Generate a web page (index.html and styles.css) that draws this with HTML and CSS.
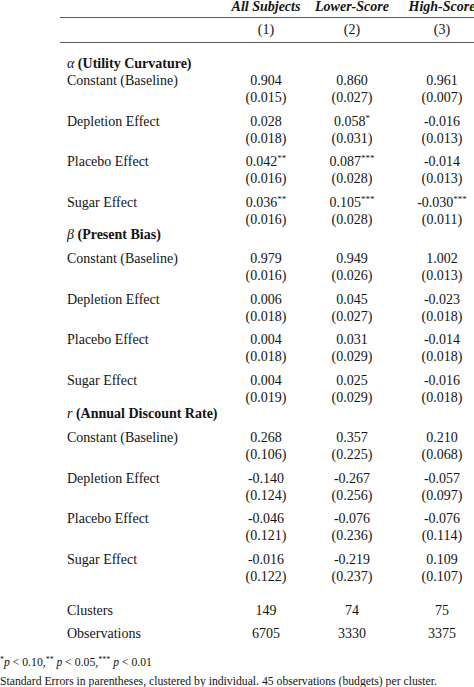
FILE: index.html
```html
<!DOCTYPE html>
<html>
<head>
<meta charset="utf-8">
<link rel="stylesheet" href="styles.css">
</head>
<body>
<div class="page">
  <div class="tbl">
    <div class="row head"><span></span><span class="c">All Subjects</span><span class="c">Lower-Score</span><span class="c">High-Score</span></div>
    <div class="rule"></div>
    <div class="row nums"><span></span><span class="c">(1)</span><span class="c">(2)</span><span class="c">(3)</span></div>
    <div class="rule"></div>

    <div class="sect first"><i class="m">α</i> <b>(Utility Curvature)</b></div>
    <div class="row data"><span class="lbl">Constant (Baseline)</span><span class="c">0.904<br>(0.015)</span><span class="c">0.860<br>(0.027)</span><span class="c">0.961<br>(0.007)</span></div>
    <div class="row data"><span class="lbl">Depletion Effect</span><span class="c">0.028<br>(0.018)</span><span class="c">0.058<sup>*</sup><br>(0.031)</span><span class="c">-0.016<br>(0.013)</span></div>
    <div class="row data"><span class="lbl">Placebo Effect</span><span class="c">0.042<sup>**</sup><br>(0.016)</span><span class="c">0.087<sup>***</sup><br>(0.028)</span><span class="c">-0.014<br>(0.013)</span></div>
    <div class="row data"><span class="lbl">Sugar Effect</span><span class="c">0.036<sup>**</sup><br>(0.016)</span><span class="c">0.105<sup>***</sup><br>(0.028)</span><span class="c">-0.030<sup>***</sup><br>(0.011)</span></div>

    <div class="sect"><i class="m">β</i> <b>(Present Bias)</b></div>
    <div class="row data"><span class="lbl">Constant (Baseline)</span><span class="c">0.979<br>(0.016)</span><span class="c">0.949<br>(0.026)</span><span class="c">1.002<br>(0.013)</span></div>
    <div class="row data"><span class="lbl">Depletion Effect</span><span class="c">0.006<br>(0.018)</span><span class="c">0.045<br>(0.027)</span><span class="c">-0.023<br>(0.018)</span></div>
    <div class="row data"><span class="lbl">Placebo Effect</span><span class="c">0.004<br>(0.018)</span><span class="c">0.031<br>(0.029)</span><span class="c">-0.014<br>(0.018)</span></div>
    <div class="row data"><span class="lbl">Sugar Effect</span><span class="c">0.004<br>(0.019)</span><span class="c">0.025<br>(0.029)</span><span class="c">-0.016<br>(0.018)</span></div>

    <div class="sect late"><i class="m">r</i> <b>(Annual Discount Rate)</b></div>
    <div class="row data"><span class="lbl">Constant (Baseline)</span><span class="c">0.268<br>(0.106)</span><span class="c">0.357<br>(0.225)</span><span class="c">0.210<br>(0.068)</span></div>
    <div class="row data"><span class="lbl">Depletion Effect</span><span class="c">-0.140<br>(0.124)</span><span class="c">-0.267<br>(0.256)</span><span class="c">-0.057<br>(0.097)</span></div>
    <div class="row data"><span class="lbl">Placebo Effect</span><span class="c">-0.046<br>(0.121)</span><span class="c">-0.076<br>(0.236)</span><span class="c">-0.076<br>(0.114)</span></div>
    <div class="row data"><span class="lbl">Sugar Effect</span><span class="c">-0.016<br>(0.122)</span><span class="c">-0.219<br>(0.237)</span><span class="c">0.109<br>(0.107)</span></div>

    <div class="row count first"><span class="lbl">Clusters</span><span class="c">149</span><span class="c">74</span><span class="c">75</span></div>
    <div class="row count"><span class="lbl">Observations</span><span class="c">6705</span><span class="c">3330</span><span class="c">3375</span></div>
  </div>
  <div class="notes">
    <p class="note"><sup>*</sup><i class="m">p</i>&nbsp;&lt;&nbsp;0.10,<sup>**</sup> <i class="m">p</i>&nbsp;&lt;&nbsp;0.05,<sup>***</sup> <i class="m">p</i>&nbsp;&lt;&nbsp;0.01</p>
    <p class="note">Standard Errors in parentheses, clustered by individual. 45 observations (budgets) per cluster.</p>
  </div>
</div>
</body>
</html>
```

FILE: styles.css
```css
html, body {
  margin: 0;
  padding: 0;
  overflow: hidden;
  background: #ffffff;
}
body {
  width: 474px;
  height: 687px;
  font-family: "Liberation Serif", "Times New Roman", serif;
  color: #141414;
}
.page {
  width: 474px;
}
.tbl {
  margin-left: 60px;
  width: 428px;
  font-size: 14px;
}
.row {
  display: grid;
  grid-template-columns: 164px 84px 88px 92px;
}
.lbl {
  padding-left: 7px;
  white-space: nowrap;
}
.c {
  text-align: center;
  white-space: nowrap;
}
.head {
  line-height: 13px;
  padding-bottom: 4px;
  font-weight: bold;
  font-style: italic;
}
.rule {
  height: 1px;
  background: #5a5a5a;
}
.nums {
  line-height: 24px;
}
.sect {
  line-height: 17px;
  padding-left: 7px;
  white-space: nowrap;
}
.sect b {
  font-weight: bold;
}
.m {
  font-style: italic;
}
.sect.first {
  margin-top: 12px;
}
.data {
  line-height: 17px;
  margin-top: 6.5px;
}
.sect + .data {
  margin-top: 7px;
}
.sect.first + .data {
  margin-top: 0;
}
.data + .sect {
  margin-top: -1.5px;
}
.data + .sect.late {
  margin-top: -0.5px;
}
sup {
  font-size: 9px;
  line-height: 0;
  vertical-align: 5px;
}
.count {
  line-height: 17px;
  margin-top: 6px;
}
.count.first {
  margin-top: 17px;
}
.notes {
  margin-top: 11px;
  font-size: 11.7px;
  line-height: 19px;
}
.note {
  margin: 0;
  white-space: nowrap;
}
.note sup {
  font-size: 8px;
  vertical-align: 4px;
}
```
